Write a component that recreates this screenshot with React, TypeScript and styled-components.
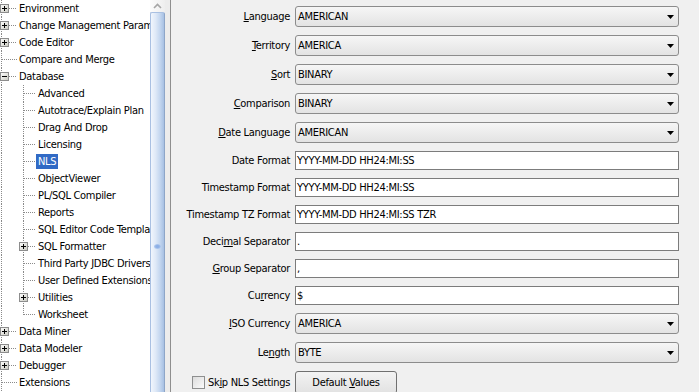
import React from 'react';
import styled, { createGlobalStyle } from 'styled-components';

const FONT = `"DejaVu Sans Condensed", "Liberation Sans", Tahoma, sans-serif`;

const Global = createGlobalStyle`
  html, body { margin: 0; padding: 0; height: 100%; overflow: hidden; background: #f0f0f0; }
  body { font-family: ${FONT}; font-size: 11px; letter-spacing: -0.3px; color: #000; }
  #root { height: 100%; }
`;

const Window = styled.div`
  display: flex;
  width: 699px;
  height: 392px;
  overflow: hidden;
  background: #f0f0f0;
`;

/* ---------- left tree ---------- */
const TreePane = styled.div`
  display: flex;
  flex-shrink: 0;
  height: 100%;
`;

const Tree = styled.div`
  width: 150px;
  background: #fff;
  overflow: hidden;
  display: flex;
  flex-direction: column;
`;

const Row = styled.div`
  display: flex;
  align-items: center;
  height: 17px;
  flex-shrink: 0;
  white-space: nowrap;
`;

const NodeLabel = styled.span<{ $selected?: boolean }>`
  padding: 0 2px;
  height: 15px;
  line-height: 15px;
  background: ${(p) => (p.$selected ? '#316ac5' : 'transparent')};
  color: ${(p) => (p.$selected ? '#fff' : '#000')};
`;

const ScrollBar = styled.div`
  width: 15px;
  flex-shrink: 0;
  display: flex;
  flex-direction: column;
  overflow: hidden;
  background: #f2f2f2;
`;

const ArrowButton = styled.div`
  height: 12px;
  flex-shrink: 0;
  display: flex;
  align-items: center;
  justify-content: center;
  background: linear-gradient(to right, #fcfcfc, #eeeeee);
`;

const Thumb = styled.div`
  flex-shrink: 0;
  height: 468px;
  box-sizing: border-box;
  border: 1px solid #a9c0e2;
  border-right-color: #8ea6c8;
  border-radius: 2px;
  background: linear-gradient(to right, #f1f6fd 0%, #dfe9f7 35%, #c3d6ef 70%, #a7c0e3 100%);
  display: flex;
  align-items: center;
  justify-content: center;
`;

const Grip = styled.div`
  width: 7px;
  height: 5px;
  border-radius: 50%;
  background: radial-gradient(#8db0e6 30%, #d3e1f5 100%);
`;

const SplitGap = styled.div`
  width: 5px;
  flex-shrink: 0;
  background: #ececec;
`;

const SplitLine = styled.div`
  width: 1px;
  flex-shrink: 0;
  background: #8e8e8e;
`;

/* ---------- right form ---------- */
const Panel = styled.div`
  flex: 1;
  box-sizing: border-box;
  padding: 6px 20px 0 0;
`;

const Form = styled.div`
  display: grid;
  grid-template-columns: 119px 1fr;
  column-gap: 5px;
  row-gap: 8px;
  align-items: center;
`;

const Label = styled.label`
  text-align: right;
  white-space: nowrap;
`;

const Combo = styled.div`
  height: 21px;
  box-sizing: border-box;
  border: 1px solid #8c8c8c;
  border-radius: 3px;
  background: linear-gradient(#f6f6f6, #e3e3e3);
  display: flex;
  align-items: center;
  justify-content: space-between;
  padding: 0 4px 0 2px;
`;

const Field = styled.div`
  height: 19px;
  box-sizing: border-box;
  border: 1px solid #7c7c7c;
  background: #fff;
  display: flex;
  align-items: center;
  padding-left: 1px;
  white-space: nowrap;
`;

const CheckCell = styled.div`
  display: flex;
  justify-content: flex-end;
  align-items: center;
  gap: 3px;
  white-space: nowrap;
`;

const CheckBox = styled.span`
  width: 13px;
  height: 13px;
  box-sizing: border-box;
  border: 1px solid #8e8f8f;
  background: linear-gradient(135deg, #dcdcdc, #fbfbfb);
`;

const Button = styled.button`
  justify-self: start;
  width: 102px;
  height: 23px;
  box-sizing: border-box;
  border: 1px solid #707070;
  border-radius: 3px;
  background: linear-gradient(#f3f3f3, #e2e2e2);
  font: inherit;
  letter-spacing: inherit;
  color: #000;
  padding: 0;
`;

/* ---------- drawings ---------- */
const DOT = '#8a8a8a';

type Kind = 'plus' | 'minus' | 'leaf';

function ExpandBox({ x, kind }: { x: number; kind: Kind }) {
  return (
    <g>
      <defs>
        <linearGradient id="bx" x1="0" y1="0" x2="1" y2="1">
          <stop offset="0" stopColor="#ffffff" />
          <stop offset="1" stopColor="#c9c9c0" />
        </linearGradient>
      </defs>
      <rect x={x + 0.5} y={4.5} width={8} height={8} fill="url(#bx)" stroke="#8d8d8d" />
      <line x1={x + 2} y1={8.5} x2={x + 7} y2={8.5} stroke="#000" />
      {kind === 'plus' && <line x1={x + 4.5} y1={6} x2={x + 4.5} y2={11} stroke="#000" />}
    </g>
  );
}

function Gutter({ level, kind, last }: { level: number; kind: Kind; last?: boolean }) {
  const w = level === 0 ? 17 : 36;
  return (
    <svg width={w} height={17} style={{ flexShrink: 0, display: 'block' }} shapeRendering="crispEdges">
      <line x1={1.5} y1={0} x2={1.5} y2={17} stroke={DOT} strokeDasharray="1 1" />
      {level === 0 ? (
        kind === 'leaf' ? (
          <line x1={2} y1={8.5} x2={17} y2={8.5} stroke={DOT} strokeDasharray="1 1" />
        ) : (
          <>
            <line x1={9} y1={8.5} x2={17} y2={8.5} stroke={DOT} strokeDasharray="1 1" />
            <ExpandBox x={0} kind={kind} />
          </>
        )
      ) : (
        <>
          <line x1={23.5} y1={0} x2={23.5} y2={last ? 9 : 17} stroke={DOT} strokeDasharray="1 1" />
          {kind === 'leaf' ? (
            <line x1={24} y1={8.5} x2={35} y2={8.5} stroke={DOT} strokeDasharray="1 1" />
          ) : (
            <>
              <line x1={28} y1={8.5} x2={35} y2={8.5} stroke={DOT} strokeDasharray="1 1" />
              <ExpandBox x={19} kind={kind} />
            </>
          )}
        </>
      )}
    </svg>
  );
}

function ComboArrow() {
  return (
    <svg width={7} height={4} style={{ display: 'block', flexShrink: 0 }}>
      <polygon points="0,0 7,0 3.5,4" fill="#000" />
    </svg>
  );
}

function UpChevron() {
  return (
    <svg width={9} height={6} style={{ display: 'block' }}>
      <polyline points="1,5 4.5,1.5 8,5" fill="none" stroke="#a6a6a6" strokeWidth={1.6} />
    </svg>
  );
}

/* ---------- data ---------- */
type Node = { label: string; level: number; kind: Kind; selected?: boolean; last?: boolean };

const nodes: Node[] = [
  { label: 'Environment', level: 0, kind: 'plus' },
  { label: 'Change Management Parameters', level: 0, kind: 'plus' },
  { label: 'Code Editor', level: 0, kind: 'plus' },
  { label: 'Compare and Merge', level: 0, kind: 'leaf' },
  { label: 'Database', level: 0, kind: 'minus' },
  { label: 'Advanced', level: 1, kind: 'leaf' },
  { label: 'Autotrace/Explain Plan', level: 1, kind: 'leaf' },
  { label: 'Drag And Drop', level: 1, kind: 'leaf' },
  { label: 'Licensing', level: 1, kind: 'leaf' },
  { label: 'NLS', level: 1, kind: 'leaf', selected: true },
  { label: 'ObjectViewer', level: 1, kind: 'leaf' },
  { label: 'PL/SQL Compiler', level: 1, kind: 'leaf' },
  { label: 'Reports', level: 1, kind: 'leaf' },
  { label: 'SQL Editor Code Templates', level: 1, kind: 'leaf' },
  { label: 'SQL Formatter', level: 1, kind: 'plus' },
  { label: 'Third Party JDBC Drivers', level: 1, kind: 'leaf' },
  { label: 'User Defined Extensions', level: 1, kind: 'leaf' },
  { label: 'Utilities', level: 1, kind: 'plus' },
  { label: 'Worksheet', level: 1, kind: 'leaf', last: true },
  { label: 'Data Miner', level: 0, kind: 'plus' },
  { label: 'Data Modeler', level: 0, kind: 'plus' },
  { label: 'Debugger', level: 0, kind: 'plus' },
  { label: 'Extensions', level: 0, kind: 'leaf' },
];

type Setting = {
  label: React.ReactNode;
  value: string;
  type: 'combo' | 'field';
};

const M = ({ children }: { children: React.ReactNode }) => <u>{children}</u>;

const settings: Setting[] = [
  { label: <><M>L</M>anguage</>, value: 'AMERICAN', type: 'combo' },
  { label: <><M>T</M>erritory</>, value: 'AMERICA', type: 'combo' },
  { label: <><M>S</M>ort</>, value: 'BINARY', type: 'combo' },
  { label: <><M>C</M>omparison</>, value: 'BINARY', type: 'combo' },
  { label: <><M>D</M>ate Language</>, value: 'AMERICAN', type: 'combo' },
  { label: 'Date Format', value: 'YYYY-MM-DD HH24:MI:SS', type: 'field' },
  { label: 'Timestamp Format', value: 'YYYY-MM-DD HH24:MI:SS', type: 'field' },
  { label: 'Timestamp TZ Format', value: 'YYYY-MM-DD HH24:MI:SS TZR', type: 'field' },
  { label: <>Deci<M>m</M>al Separator</>, value: '.', type: 'field' },
  { label: <><M>G</M>roup Separator</>, value: ',', type: 'field' },
  { label: <>Cu<M>r</M>rency</>, value: '$', type: 'field' },
  { label: <><M>I</M>SO Currency</>, value: 'AMERICA', type: 'combo' },
  { label: <>Le<M>n</M>gth</>, value: 'BYTE', type: 'combo' },
];

export default function App() {
  return (
    <>
      <Global />
      <Window>
        <TreePane>
          <Tree>
            {nodes.map((n, i) => (
              <Row key={i}>
                <Gutter level={n.level} kind={n.kind} last={n.last} />
                <NodeLabel $selected={n.selected}>{n.label}</NodeLabel>
              </Row>
            ))}
          </Tree>
          <ScrollBar>
            <ArrowButton>
              <UpChevron />
            </ArrowButton>
            <Thumb>
              <Grip />
            </Thumb>
          </ScrollBar>
          <SplitGap />
          <SplitLine />
        </TreePane>
        <Panel>
          <Form>
            {settings.map((s, i) => (
              <React.Fragment key={i}>
                <Label>{s.label}</Label>
                {s.type === 'combo' ? (
                  <Combo>
                    <span>{s.value}</span>
                    <ComboArrow />
                  </Combo>
                ) : (
                  <Field>{s.value}</Field>
                )}
              </React.Fragment>
            ))}
            <CheckCell>
              <CheckBox />
              <span>
                Sk<u>i</u>p NLS Settings
              </span>
            </CheckCell>
            <Button>
              Default <u>V</u>alues
            </Button>
          </Form>
        </Panel>
      </Window>
    </>
  );
}
